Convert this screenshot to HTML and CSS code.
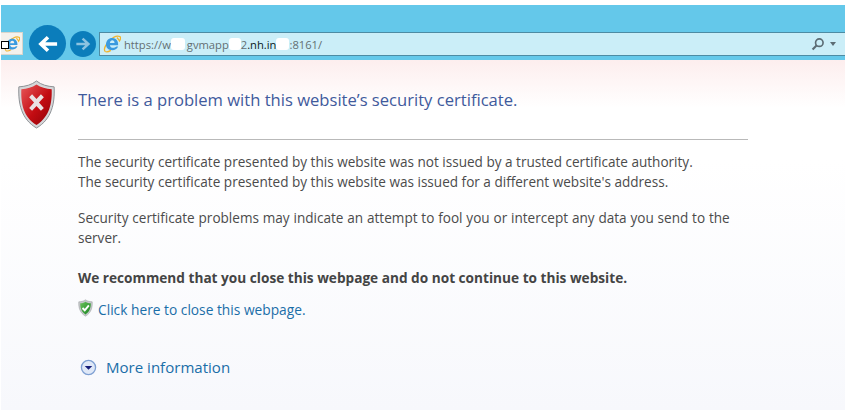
FILE: index.html
```html
<!DOCTYPE html>
<html lang="en">
<head>
<meta charset="utf-8">
<title>Certificate Error</title>
<link rel="stylesheet" href="styles.css">
</head>
<body>
<svg class="defs" aria-hidden="true">
  <defs>
    <g id="ie">
      <path d="M3 22c-2.500-2.500 0-8 5-14C13 3 19 .5 22.500 2c1.500 1 1 3.500-.5 6-1-2-2-3.500-3.500-4.500" fill="none" stroke="#f0b42c" stroke-width="1.700"/>
      <path d="M3 22c2 1 5 0 7.500-1.500" fill="none" stroke="#f0b42c" stroke-width="1.700"/>
      <path d="M4 13c0-5.500 3.500-9 8.500-9s8 3.800 7.700 9.500H9.200c.3 3.400 5 5 8.800 1.700h2.200c-1.600 3.300-4.500 5-7.800 5C7 20.200 4 17 4 13zm5.200-2.300h6.200c-.1-2.500-1.300-3.700-3-3.700S9.500 8.200 9.200 10.700z" fill="#3a9adf"/>
    </g>
    <linearGradient id="red" x1="0" y1="0" x2="1" y2="1">
      <stop offset="0" stop-color="#e8585a"/><stop offset=".55" stop-color="#c30c12"/><stop offset="1" stop-color="#8c0208"/>
    </linearGradient>
    <linearGradient id="green" x1="0" y1="0" x2="1" y2="1">
      <stop offset="0" stop-color="#6cc35c"/><stop offset="1" stop-color="#16821e"/>
    </linearGradient>
  </defs>
</svg>
<div class="window">
  <header class="chrome">
    <div class="tab-stub">
      <svg class="ie-small" viewBox="0 0 24 24"><use href="#ie"/></svg>
      <span class="stub-box"></span>
    </div>
    <button class="nav back" aria-label="Back">
      <svg viewBox="0 0 40 40"><path d="M34 20H11M20 9.500 9 20l11 10.500" fill="none" stroke="#fff" stroke-width="5.500"/></svg>
    </button>
    <button class="nav forward" aria-label="Forward">
      <svg viewBox="0 0 24 24"><path d="M4 12h14M11.500 5.500 18.500 12l-7 6.500" fill="none" stroke="#8cc3e0" stroke-width="3"/></svg>
    </button>
    <div class="address">
      <svg class="ie" viewBox="0 0 24 24"><use href="#ie"/></svg>
      <div class="url"><span>https://w</span><i class="mask m1"></i><span>gvmapp</span><i class="mask m2"></i><span>2</span><b>.nh.in</b><i class="mask m3"></i><span>:8161/</span></div>
      <svg class="search" viewBox="0 0 16 16"><circle cx="9.500" cy="6.500" r="4.300" fill="none" stroke="#5c6c74" stroke-width="1.900"/><path d="M6.300 9.700 1.800 14.200" stroke="#5c6c74" stroke-width="2.400"/></svg>
      <span class="caret"></span>
    </div>
  </header>

  <main class="page">
    <div class="title-row">
      <svg class="shield" viewBox="0 0 40 50">
        <path d="M20 1c5 4 11 5.500 18 6 .8 17-2.500 33-18 42C4.500 40 1.200 24 2 7c7-.500 13-2 18-6z" fill="#d5d6d8" stroke="#8b8f93" stroke-width="1"/>
        <path d="M20 4.500c4.500 3 9.500 4.500 15.500 5 .5 14-2 28-15.500 36.500C6.500 38 4 24 4.500 9.500c6-.500 11-2 15.500-5z" fill="url(#red)"/>
        <path d="M12.500 17.500l3-3 4.500 5 4.500-5 3 3-5 5.500 5 5.500-3 3-4.500-5-4.500 5-3-3 5-5.500z" fill="#e9e3e3"/>
      </svg>
      <h1>There is a problem with this website’s security certificate.</h1>
    </div>
    <hr class="rule">
    <p class="lines">The security certificate presented by this website was not issued by a trusted certificate authority.<br>The security certificate presented by this website was issued for a different website's address.</p>
    <p class="warn">Security certificate problems may indicate an attempt to fool you or intercept any data you send to the server.</p>
    <p class="rec">We recommend that you close this webpage and do not continue to this website.</p>
    <div class="close-row">
      <svg class="ok" viewBox="0 0 40 46">
        <path d="M20 1c5 4 11 5 18 5.500C39 22 35 36 20 45 5 36 1 22 2 6.500 9 6 15 5 20 1z" fill="#c5c8ca" stroke="#85898c"/>
        <path d="M20 6c4.500 3 9 4 14 4.500C34.500 23 31 33 20 40 9 33 5.500 23 6 10.500 11 10 15.500 9 20 6z" fill="url(#green)"/>
        <path d="M12 23l6 6 11-13" fill="none" stroke="#fff" stroke-width="5"/>
      </svg>
      <a href="#">Click here to close this webpage.</a>
    </div>
    <div class="more-row">
      <svg class="more-icon" viewBox="0 0 18 18">
        <circle cx="9" cy="9" r="7.500" fill="#dfe8f7" stroke="#7d9fd2" stroke-width="1.400"/>
        <path d="M5 7.500h8l-4 4z" fill="#141c78"/>
      </svg>
      <a href="#">More information</a>
    </div>
  </main>
</div>
</body>
</html>
```

FILE: styles.css
```css
* { box-sizing: border-box; }
html, body { margin: 0; height: 100%; background: #fff; overflow: hidden; }
body { font-family: "Open Sans", "Noto Sans", sans-serif; }
.defs { position: absolute; width: 0; height: 0; }
.window { height: 410px; padding: 5px 1px 0 1px; display: flex; flex-direction: column; }

.chrome {
  height: 55px; flex: none; background: #64c8ea;
  display: flex; align-items: flex-end; overflow: hidden;
}
.tab-stub {
  width: 22px; height: 23px; margin: 0 6px 5px 0; flex: none;
  background: #f4f1ec; border: 1px solid #d8d5cc; border-left: 0; position: relative;
  display: flex; align-items: center; justify-content: flex-end; padding: 0 2px 0 0;
}
.ie-small { width: 16px; height: 16px; }
.stub-box {
  position: absolute; left: 0; top: 8px; width: 8px; height: 8px;
  background: #fff; border: 1px solid #000;
}
.nav { border: 0; padding: 0; background: #0b7dbb; border-radius: 50%; flex: none; display: flex; align-items: center; justify-content: center; }
.back { width: 37px; height: 37px; margin: 0 4px -2px 0; }
.back svg { width: 26px; height: 26px; }
.forward { width: 26px; height: 26px; margin: 0 3px 3px 0; }
.forward svg { width: 20px; height: 20px; }
.address {
  flex: 1; height: 24px; margin-bottom: 4px; background: #cbeef8;
  border: 1px solid #4d8ba3; border-right: 0;
  display: flex; align-items: center; padding: 0 9px 0 3px;
}
.ie { width: 18px; height: 18px; flex: none; }
.url {
  flex: 1; display: flex; align-items: center; margin-left: 3px;
  font-size: 11.200px; color: #646e72; white-space: nowrap;
}
.url b { font-weight: 400; color: #0b1a22; }
.mask { display: block; height: 12px; background: #fff; border-radius: 3px; filter: blur(.6px); }
.m1 { width: 14px; margin-right: 2px; }
.m2 { width: 12px; }
.m3 { width: 13px; }
.search { width: 14px; height: 14px; }
.caret {
  margin-left: 5px; width: 0; height: 0;
  border: 3.500px solid transparent; border-top: 4px solid #5c6c74; border-bottom: 0;
}

.page {
  flex: 1; padding: 20px 97px 0 15px;
  background: linear-gradient(#fdeeee 0, #fff 48px, #fff 100px, #f7f8fc 350px);
}
.title-row { display: flex; align-items: flex-start; height: 59px; }
.shield { width: 41px; height: 49px; flex: none; margin-right: 21px; }
h1 { margin: 9px 0 0; font-size: 16.600px; line-height: 22px; font-weight: 400; color: #3f5a9c; white-space: nowrap; }
.rule { height: 1px; border: 0; background: #b9b9b9; margin: 0 0 0 62px; }
p { margin: 0 0 0 62px; font-size: 13.570px; line-height: 20px; color: #4b4b4b; }
.lines { margin-top: 12px; }
.warn { margin-top: 16px; word-spacing: .33px; }
.rec { margin-top: 20px; font-weight: 700; font-size: 13.650px; color: #444; }
a { color: #1a6ea8; text-decoration: none; }
.close-row { display: flex; align-items: flex-start; margin: 11px 0 0 62px; font-size: 13.760px; line-height: 18px; }
.ok { width: 15px; height: 18px; flex: none; margin-right: 5px; }
.close-row a { margin-top: 2px; }
.more-row { display: flex; align-items: center; margin: 38px 0 0 64px; font-size: 15.050px; line-height: 20px; }
.more-icon { width: 17px; height: 17px; margin-right: 9px; flex: none; }
```
